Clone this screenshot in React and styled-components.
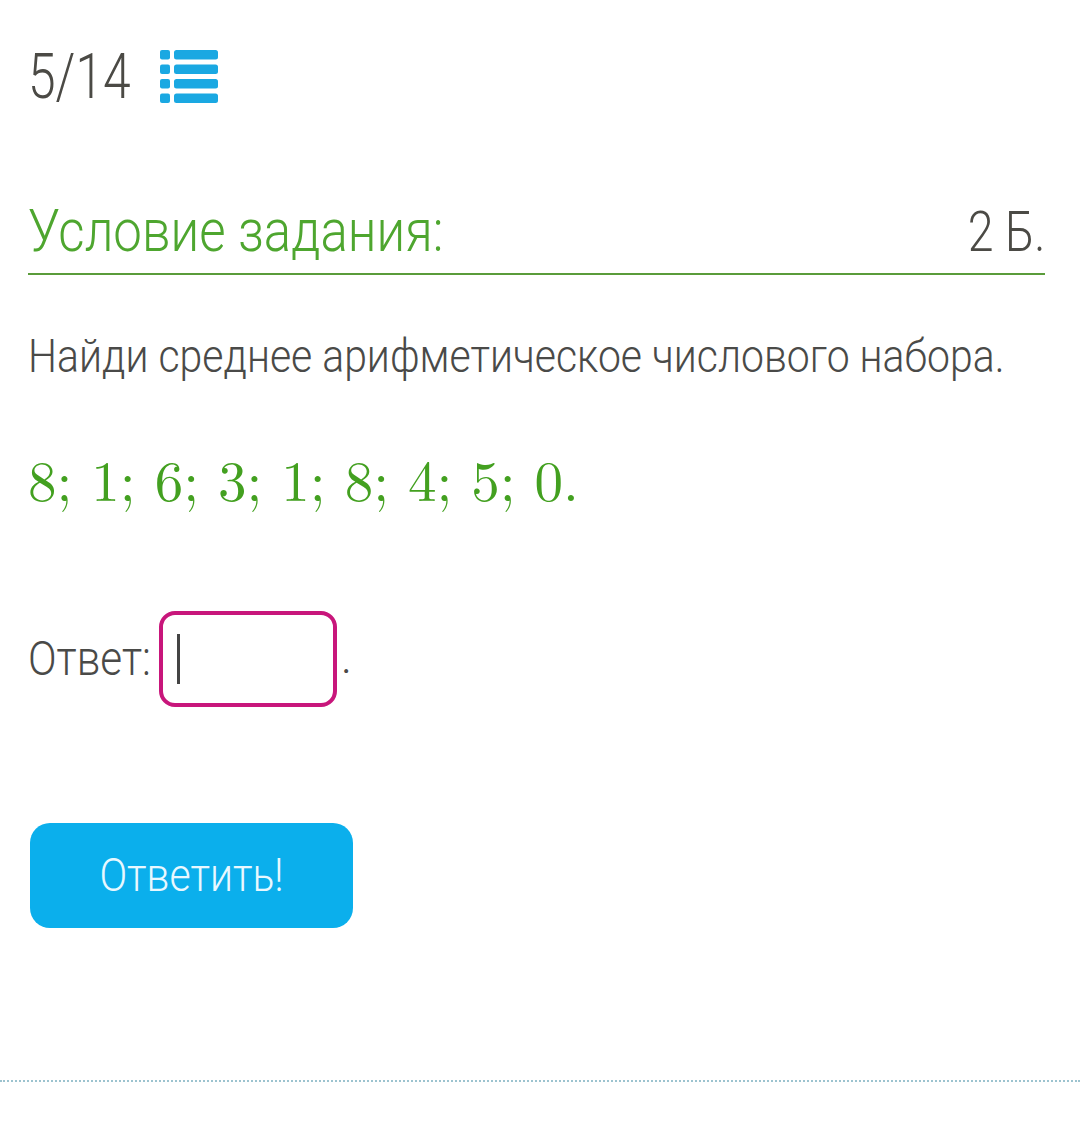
import styled, { createGlobalStyle } from 'styled-components';

const GlobalStyle = createGlobalStyle`
  html, body {
    margin: 0;
    padding: 0;
    background: #fff;
  }
  body {
    font-family: Roboto, "Noto Sans", sans-serif;
    font-weight: 300;
  }
`;

/* Condensed text: Roboto squeezed to the width of the narrow face in the picture */
const Narrow = styled.span`
  display: inline-block;
  white-space: nowrap;
  transform: scaleX(${props => props.$scale || 0.88});
  transform-origin: ${props => props.$origin || 'left'} center;
  margin-right: ${props => props.$trim || 0}px;
`;

/* Page */
const Page = styled.div`
  width: 1080px;
  height: 1133px;
  box-sizing: border-box;
  padding: 36px 35px 0 28px;
  display: flex;
  flex-direction: column;
`;

/* Counter row */
const Counter = styled.div`
  display: flex;
  align-items: center;
  gap: 27px;
  height: 80px;
`;

const CounterText = styled.span`
  font-size: 63px;
  color: #4b4a45;
  line-height: 1;
`;

const ListIcon = () => (
  <svg width="58" height="56" viewBox="0 0 58 56">
    {[0, 1, 2, 3].map(i => (
      <g key={i} fill="#1aa8e2">
        <rect x="0" y={2 + i * 14.5} width="10" height="9.5" rx="2" />
        <rect x="14" y={2 + i * 14.5} width="44" height="9.5" rx="2.5" />
      </g>
    ))}
  </svg>
);

/* Header */
const Header = styled.div`
  margin-top: 82px;
  display: flex;
  justify-content: space-between;
  align-items: baseline;
  border-bottom: 2px solid #5a9c3a;
  padding-bottom: 8px;
`;

const Title = styled.h2`
  margin: 0;
  font-size: 60px;
  font-weight: 300;
  color: #4ea62f;
  line-height: 1.1;
`;

const Points = styled.span`
  font-size: 56px;
  color: #4b4a45;
`;

/* Task body */
const Question = styled.p`
  margin: 54px 0 0 0;
  font-size: 46px;
  color: #4a4a48;
  line-height: 1.2;
`;

const Numbers = styled.div`
  margin-top: 60px;
  font-family: "Latin Modern Roman", "Liberation Serif", serif;
  font-weight: 400;
  font-size: 57px;
  color: #43a020;
  line-height: 1.2;
`;

/* Answer row */
const AnswerRow = styled.div`
  margin-top: 98px;
  display: flex;
  align-items: center;
  gap: 6px;
  font-size: 48px;
  color: #4a4a48;
`;

const AnswerBox = styled.div`
  width: 156px;
  height: 88px;
  border: 4px solid #c8167b;
  border-radius: 16px;
  display: flex;
  align-items: center;
  padding-left: 14px;
  box-sizing: content-box;
  margin-left: 2px;
`;

const Caret = styled.span`
  width: 3px;
  height: 50px;
  background: #444;
`;

const Dot = styled.span`
  align-self: flex-end;
  margin-bottom: 22px;
  margin-left: -2px;
`;

/* Submit */
const SubmitButton = styled.button`
  margin-top: 116px;
  margin-left: 2px;
  width: 323px;
  height: 105px;
  border: none;
  border-radius: 20px;
  background: #0bafec;
  color: #e8f8ff;
  font-family: Roboto, sans-serif;
  font-weight: 300;
  font-size: 46px;
  cursor: pointer;
`;

const Divider = styled.div`
  margin: 152px -35px 0 -28px;
  border-top: 2px dotted #9cc3cf;
`;

export default function App() {
  return (
    <>
      <GlobalStyle />
      <Page>
        <Counter>
          <CounterText>
            <Narrow $scale={0.79} $trim={-25}>5/14</Narrow>
          </CounterText>
          <ListIcon />
        </Counter>
        <Header>
          <Title>
            <Narrow $scale={0.85}>Условие задания:</Narrow>
          </Title>
          <Points>
            <Narrow $scale={0.83} $origin="right">2 Б.</Narrow>
          </Points>
        </Header>
        <Question>
          <Narrow $scale={0.89}>Найди среднее арифметическое числового набора.</Narrow>
        </Question>
        <Numbers>8; 1; 6; 3; 1; 8; 4; 5; 0.</Numbers>
        <AnswerRow>
          <Narrow $scale={0.88} $trim={-17}>Ответ:</Narrow>
          <AnswerBox>
            <Caret />
          </AnswerBox>
          <Dot>.</Dot>
        </AnswerRow>
        <div>
          <SubmitButton>
            <Narrow $scale={0.89} $origin="center">Ответить!</Narrow>
          </SubmitButton>
        </div>
        <Divider />
      </Page>
    </>
  );
}
